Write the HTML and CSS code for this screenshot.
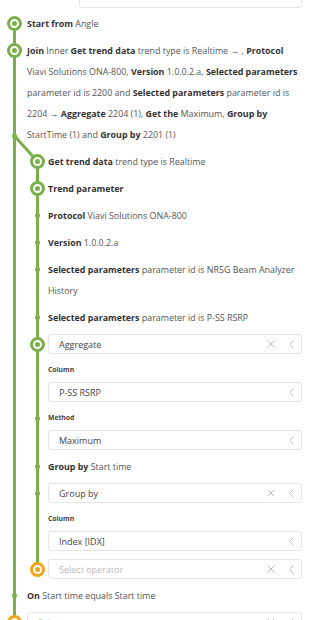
FILE: index.html
```html
<!DOCTYPE html>
<html lang="en">
<head>
<meta charset="UTF-8">
<meta name="viewport" content="width=device-width, initial-scale=1.0">
<title>Query steps</title>
<link rel="stylesheet" href="styles.css">
</head>
<body>

<div class="panel">
  <div class="remove-box">Remove</div>

  <div class="tl">
    <div class="item">
      <span class="mk"><svg class="ring" viewBox="0 0 15 15"><circle cx="7.5" cy="7.5" r="6" /><circle class="core" cx="7.5" cy="7.5" r="2.5" /></svg></span>
      <div class="txt"><b>Start from</b> Angle</div>
    </div>

    <div class="item">
      <span class="mk"><svg class="ring" viewBox="0 0 15 15"><circle cx="7.5" cy="7.5" r="6" /><circle class="core" cx="7.5" cy="7.5" r="2.5" /></svg></span>
      <div class="txt"><b>Join</b> Inner <b>Get trend data</b> trend type is Realtime &rarr; , <b>Protocol</b> Viavi Solutions ONA-800, <b>Version</b> 1.0.0.2.a, <b>Selected parameters</b> parameter id is 2200 and <b>Selected parameters</b> parameter id is 2204 &rarr; <b>Aggregate</b> 2204 (1), <b>Get the</b> Maximum, <b>Group by</b> StartTime (1) and <b>Group by</b> 2201 (1)</div>
    </div>

    <div class="branch">
      <!-- connector from the join line to the nested steps -->
      <svg class="connector" width="30" height="32" viewBox="0 0 30 32">
        <line x1="3.5" y1="3" x2="21.8" y2="23.3" />
        <circle cx="3.5" cy="3" r="2.5" />
      </svg>

      <div class="item">
        <span class="mk"><svg class="ring" viewBox="0 0 15 15"><circle cx="7.5" cy="7.5" r="6" /><circle class="core" cx="7.5" cy="7.5" r="2.5" /></svg></span>
        <div class="txt"><b>Get trend data</b> trend type is Realtime</div>
      </div>
      <div class="item">
        <span class="mk"><svg class="ring" viewBox="0 0 15 15"><circle cx="7.5" cy="7.5" r="6" /><circle class="core" cx="7.5" cy="7.5" r="2.5" /></svg></span>
        <div class="txt"><b>Trend parameter</b></div>
      </div>
      <div class="item">
        <span class="mk"><svg class="dot" viewBox="0 0 15 15"><circle cx="7.5" cy="7.5" r="2.5" /></svg></span>
        <div class="txt"><b>Protocol</b> Viavi Solutions ONA-800</div>
      </div>
      <div class="item">
        <span class="mk"><svg class="dot" viewBox="0 0 15 15"><circle cx="7.5" cy="7.5" r="2.5" /></svg></span>
        <div class="txt"><b>Version</b> 1.0.0.2.a</div>
      </div>
      <div class="item">
        <span class="mk"><svg class="dot" viewBox="0 0 15 15"><circle cx="7.5" cy="7.5" r="2.5" /></svg></span>
        <div class="txt"><b>Selected parameters</b> parameter id is NR5G Beam Analyzer History</div>
      </div>
      <div class="item">
        <span class="mk"><svg class="dot" viewBox="0 0 15 15"><circle cx="7.5" cy="7.5" r="2.5" /></svg></span>
        <div class="txt"><b>Selected parameters</b> parameter id is P-SS RSRP</div>
      </div>

      <div class="item">
        <span class="mk mk-box"><svg class="ring" viewBox="0 0 15 15"><circle cx="7.5" cy="7.5" r="6" /><circle class="core" cx="7.5" cy="7.5" r="2.5" /></svg></span>
        <div>
          <div class="sel">
            <span class="val">Aggregate</span>
            <svg class="ico-x" viewBox="0 0 8 8"><path d="M0.5 0.5L7.5 7.5M7.5 0.5L0.5 7.5" /></svg>
            <svg class="ico-arr" viewBox="0 0 5 9"><path d="M4.5 0.5L0.5 4.5L4.5 8.5" /></svg>
          </div>
          <div class="lbl">Column</div>
          <div class="sel">
            <span class="val">P-SS RSRP</span>
            <svg class="ico-arr" viewBox="0 0 5 9"><path d="M4.5 0.5L0.5 4.5L4.5 8.5" /></svg>
          </div>
        </div>
      </div>

      <div class="item">
        <span class="mk"><svg class="dot" viewBox="0 0 15 15"><circle cx="7.5" cy="7.5" r="2.5" /></svg></span>
        <div>
          <div class="lbl lbl-first">Method</div>
          <div class="sel">
            <span class="val">Maximum</span>
            <svg class="ico-arr" viewBox="0 0 5 9"><path d="M4.5 0.5L0.5 4.5L4.5 8.5" /></svg>
          </div>
        </div>
      </div>

      <div class="item">
        <span class="mk"><svg class="dot" viewBox="0 0 15 15"><circle cx="7.5" cy="7.5" r="2.5" /></svg></span>
        <div class="txt"><b>Group by</b> Start time</div>
      </div>

      <div class="item">
        <span class="mk mk-box"><svg class="dot" viewBox="0 0 15 15"><circle cx="7.5" cy="7.5" r="2.5" /></svg></span>
        <div>
          <div class="sel">
            <span class="val">Group by</span>
            <svg class="ico-x" viewBox="0 0 8 8"><path d="M0.5 0.5L7.5 7.5M7.5 0.5L0.5 7.5" /></svg>
            <svg class="ico-arr" viewBox="0 0 5 9"><path d="M4.5 0.5L0.5 4.5L4.5 8.5" /></svg>
          </div>
          <div class="lbl">Column</div>
          <div class="sel">
            <span class="val">Index [IDX]</span>
            <svg class="ico-arr" viewBox="0 0 5 9"><path d="M4.5 0.5L0.5 4.5L4.5 8.5" /></svg>
          </div>
        </div>
      </div>

      <div class="item item-pad">
        <span class="mk mk-box"><svg class="ring ring-open" viewBox="0 0 15 15"><circle cx="7.5" cy="7.5" r="6" /><circle class="core" cx="7.5" cy="7.5" r="2.5" /></svg></span>
        <div class="sel">
          <span class="val ph">Select operator</span>
          <svg class="ico-x" viewBox="0 0 8 8"><path d="M0.5 0.5L7.5 7.5M7.5 0.5L0.5 7.5" /></svg>
          <svg class="ico-arr" viewBox="0 0 5 9"><path d="M4.5 0.5L0.5 4.5L4.5 8.5" /></svg>
        </div>
      </div>
    </div>

    <div class="item">
      <span class="mk"><svg class="dot" viewBox="0 0 15 15"><circle cx="7.5" cy="7.5" r="2.5" /></svg></span>
      <div class="txt"><b>On</b> Start time equals Start time</div>
    </div>

    <div class="item">
      <span class="mk mk-box"><svg class="ring ring-open" viewBox="0 0 15 15"><circle cx="7.5" cy="7.5" r="6" /><circle class="core" cx="7.5" cy="7.5" r="2.5" /></svg></span>
      <div class="sel">
        <span class="val ph">Select...</span>
        <svg class="ico-x" viewBox="0 0 8 8"><path d="M0.5 0.5L7.5 7.5M7.5 0.5L0.5 7.5" /></svg>
        <svg class="ico-arr" viewBox="0 0 5 9"><path d="M4.5 0.5L0.5 4.5L4.5 8.5" /></svg>
      </div>
    </div>
  </div>
</div>

</body>
</html>
```

FILE: styles.css
```css
body {
  margin: 0;
  font-family: "Open Sans", Arial, sans-serif;
  color: #555;
  background: #fff;
}
.panel {
  padding-right: 7px;
  overflow: hidden;
}
.remove-box {
  margin: -14px 0 0 79px;
  height: 22px;
  box-sizing: border-box;
  border: 1px solid #e6e6e6;
  border-radius: 0 0 3px 3px;
  padding-left: 12px;
  font-size: 9px;
  font-weight: 700;
  line-height: 20px;
  color: #333;
}
.tl {
  margin-top: 5px;
  background: linear-gradient(#79b04c, #79b04c) no-repeat 13px 10px / 3px 100%;
}
.item {
  display: grid;
  grid-template-columns: 27px 1fr;
  margin-bottom: 6px;
}
.item-pad {
  padding-top: 2px;
}
.mk {
  height: 21px;
  display: flex;
  align-items: center;
  padding-left: 7px;
}
.mk-box {
  height: 20px;
}
.mk svg {
  width: 15px;
  height: 15px;
  display: block;
}
.ring circle {
  fill: #fff;
  stroke: #79b04c;
  stroke-width: 3;
}
.ring .core {
  fill: #79b04c;
  stroke: none;
}
.ring-open circle {
  stroke: #f4a418;
}
.ring-open .core {
  fill: #f4a418;
}
.dot circle {
  fill: #79b04c;
}
.txt {
  font-size: 8.9px;
  line-height: 21px;
}
.txt b {
  color: #333;
}

.branch {
  position: relative;
  margin-left: 27px;
  margin-bottom: 6px;
  background: linear-gradient(#79b04c, #79b04c) no-repeat 9px 10px / 3px calc(100% - 20px);
}
.branch .item {
  grid-template-columns: 21px 1fr;
}
.branch .mk {
  padding-left: 3px;
}
.connector {
  position: absolute;
  left: -16px;
  top: -18px;
}
.connector line {
  stroke: #79b04c;
  stroke-width: 3;
}
.connector circle {
  fill: #79b04c;
}

.sel {
  height: 20px;
  box-sizing: border-box;
  border: 1px solid #e5e5e2;
  border-radius: 3px;
  display: flex;
  align-items: center;
  padding: 0 7px 0 10px;
  font-size: 9px;
  color: #444;
}
.sel .val {
  flex: 1;
}
.sel .ph {
  color: #bbb;
}
.ico-x {
  width: 8px;
  height: 8px;
  margin-right: 14px;
}
.ico-arr {
  width: 5px;
  height: 9px;
}
.ico-x path,
.ico-arr path {
  fill: none;
  stroke: #bdbdbd;
  stroke-width: 1;
}
.lbl {
  font-size: 6.8px;
  font-weight: 700;
  color: #444;
  line-height: 12px;
  margin: 10px 0 6px;
}
.lbl-first {
  margin-top: 4px;
}
```
